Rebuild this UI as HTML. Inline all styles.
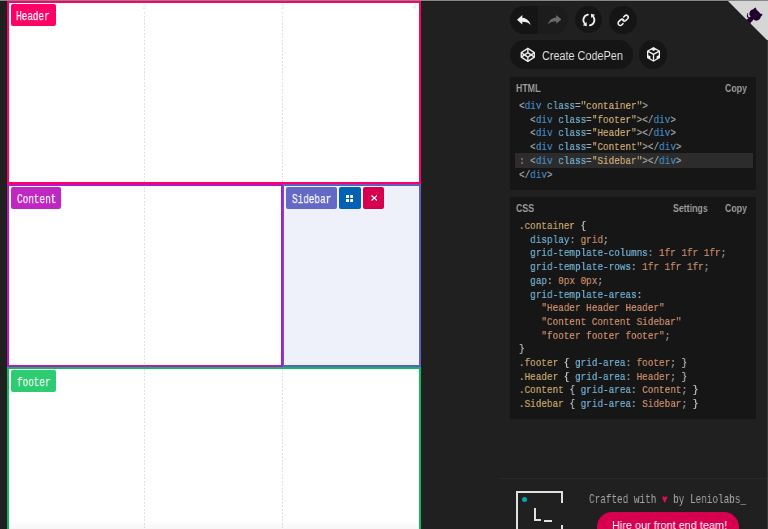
<!DOCTYPE html>
<html><head><meta charset="utf-8">
<style>
*{box-sizing:border-box;margin:0;padding:0}
html,body{width:768px;height:529px;overflow:hidden;background:#202020;font-family:"Liberation Sans",sans-serif;position:relative}
.abs{position:absolute}
#topline{left:0;top:0;width:768px;height:1px;background:rgba(165,165,165,0.775);z-index:50}
#topline2{left:0;top:1px;width:7px;height:1px;background:#1b1b1b;z-index:49}#topline3{left:421px;top:1px;width:307px;height:1px;background:#1b1b1b;z-index:49}
#rightline{left:767px;top:40px;width:1px;height:489px;background:#383838;z-index:40}
.area{position:absolute;border:2px solid}
.lbl{position:absolute;top:1px;height:22px;border-radius:2px}.lbl span{position:absolute;top:5.8px;color:#f4f4f4;font-family:"Liberation Mono",monospace;font-size:12px;line-height:14px;white-space:nowrap;transform:scaleX(0.78);transform-origin:0 0;-webkit-text-stroke:0.25px #fff;will-change:transform}
.gl{position:absolute;width:1px;background:repeating-linear-gradient(to bottom,#e2e2e2 0,#e2e2e2 2px,transparent 2px,transparent 3.5px)}.num{position:absolute;font-size:7px;color:#e6e6e6;line-height:8px}
.mono{font-family:"Liberation Mono",monospace}
.btn{position:absolute;background:#141414;border-radius:14px}
.panel{position:absolute;left:510px;width:246px;background:#161616}
.ph{position:absolute;top:0;font-weight:bold;font-size:10px;color:#9e9e9e;transform:scaleX(0.88);transform-origin:0 0;white-space:nowrap;will-change:transform}
.code{position:absolute;left:9px;font-family:"Liberation Mono",monospace;font-size:11.5px;line-height:13.7px;color:#9a9a9a;white-space:pre;transform:scaleX(0.8116);transform-origin:0 0;-webkit-text-stroke:0.2px;will-change:transform}
.t{color:#4490d0}.a{color:#74b3d6}.s{color:#d4b07a}.p{color:#a8a8a8}
.k{color:#76b5d9}.w{color:#cacaca}.v{color:#d4926f}.c{color:#cfac70}
</style></head><body>
<div id="topline" class="abs"></div>
<div id="topline2" class="abs"></div><div id="topline3" class="abs"></div>
<div id="rightline" class="abs"></div>

<!-- grid -->
<div class="abs" style="left:7px;top:1px;width:414px;height:540px;background:#fff"></div>
<div class="gl" style="left:144px;top:12px;height:530px"></div>
<div class="gl" style="left:282px;top:12px;height:530px"></div>
<div class="num" style="left:142.5px;top:3px">2</div><div class="num" style="left:280.5px;top:3px">3</div><div class="num" style="left:412.5px;top:3px">4</div>

<div class="area" style="left:7px;top:1px;width:414px;height:183px;border-color:#ff0066">
  <div class="lbl" style="left:2px;width:45px;background:#ff0066"><span style="left:5.2px">Header</span></div>
</div>
<div class="area" style="left:7px;top:184px;width:276px;height:183px;border-color:#b818bc">
  <div class="lbl" style="left:2px;width:50.2px;background:#c026c2"><span style="left:5.7px">Content</span></div>
</div>
<div class="area" style="left:283px;top:184px;width:138px;height:183px;border-color:#5c60c0;background:#eef1fa;border-width:2px 2px 2px 1px">
  <div class="lbl" style="left:2.4px;width:50.6px;background:#6569c6"><span style="left:5.9px">Sidebar</span></div>
  <div class="abs" style="left:55px;top:1px;width:21.7px;height:22px;border-radius:2px;background:#0061b5"></div>
  <div class="abs" style="left:78.7px;top:1px;width:21.7px;height:22px;border-radius:2px;background:#d6004f"></div>
  <svg class="abs" style="left:62.2px;top:8.6px" width="7.2" height="7" viewBox="0 0 7.2 7"><rect x="0" y="0" width="3" height="2.9" fill="#fff"/><rect x="4.2" y="0" width="3" height="2.9" fill="#fff"/><rect x="0" y="4.1" width="3" height="2.9" fill="#fff"/><rect x="4.2" y="4.1" width="3" height="2.9" fill="#fff"/></svg>
  <svg class="abs" style="left:86.5px;top:9px" width="6.5" height="6" viewBox="0 0 6.5 6"><path d="M0.5 0.5 L6 5.5 M6 0.5 L0.5 5.5" stroke="#fff" stroke-width="1.15"/></svg>
</div>
<div class="area" style="left:7px;top:367px;width:414px;height:183px;border-color:#10b860">
  <div class="lbl" style="left:2px;width:45.1px;background:#2ccd70"><span style="left:5.7px">footer</span></div>
</div>

<div class="abs" style="left:9px;top:521px;width:410px;height:8px;background:linear-gradient(to bottom,rgba(0,0,0,0),rgba(0,0,0,0.035))"></div>
<!-- right panel buttons -->
<div class="abs" style="left:510px;top:6px;width:58px;height:28px;border-radius:14px;overflow:hidden;background:#1c1c1c">
  <div class="abs" style="left:0;top:0;width:28.3px;height:28px;background:#151515"></div>
</div>
<svg class="abs" style="left:517.3px;top:14.9px" width="13.7" height="10.1" viewBox="3 5 18 15" preserveAspectRatio="none"><path d="M10 9V5l-7 7 7 7v-4.1c5 0 8.5 1.6 11 5.1-1-5-4-10-11-11z" fill="#f0f0f0"/></svg>
<svg class="abs" style="left:547.5px;top:15.3px" width="13.4" height="9.3" viewBox="3 5 18 15" preserveAspectRatio="none"><path d="M14 9V5l7 7-7 7v-4.1c-5 0-8.5 1.6-11 5.1 1-5 4-10 11-11z" fill="#6b6b6b"/></svg>
<div class="abs" style="left:575.1px;top:6.1px;width:27.4px;height:27.4px;border-radius:50%;background:#151515"></div>
<svg class="abs" style="left:575px;top:6px" width="28" height="28" viewBox="0 0 28 28">
  <g fill="none" stroke="#eeeeee" stroke-width="1.8" stroke-linecap="round">
    <path d="M12.94 8.58 A5.5 5.5 0 0 0 9.69 17.54"/>
    <path d="M14.86 19.42 A5.5 5.5 0 0 0 18.11 10.46"/>
  </g>
  <path d="M7.77 19.14 L11.87 20.14 L11.60 15.93 Z" fill="#eeeeee"/>
  <path d="M20.03 8.86 L15.93 7.86 L16.20 12.07 Z" fill="#eeeeee"/>
</svg>
<div class="abs" style="left:609.1px;top:6.1px;width:27.5px;height:27.5px;border-radius:50%;background:#151515"></div>
<svg class="abs" style="left:609px;top:6px" width="28" height="28" viewBox="0 0 28 28">
  <g fill="none" stroke="#eeeeee" stroke-width="1.55" stroke-linecap="round">
    <path d="M-3.33 0 A2 2 0 0 0 -1.33 2 L1.33 2 A2 2 0 0 0 1.33 -2 L-0.3 -2" transform="translate(16.3 12.2) rotate(-45)"/>
    <path d="M3.45 0 A2.2 2.2 0 0 0 1.25 -2.2 L-1.25 -2.2 A2.2 2.2 0 0 0 -1.25 2.2 L0.3 2.2" transform="translate(12.2 16.3) rotate(-45)"/>
  </g>
</svg>
<div class="abs" style="left:510px;top:40px;width:122.7px;height:28.5px;border-radius:14.25px;background:#151515"></div>
<svg class="abs" style="left:519.7px;top:46.7px" width="15.7" height="15.7" viewBox="0 0 24 24" fill="none" stroke="#e8e8e8" stroke-width="2.2" stroke-linejoin="round"><polygon points="12 2 22 8.5 22 15.5 12 22 2 15.5 2 8.5 12 2"/><line x1="12" y1="22" x2="12" y2="15.5"/><polyline points="22 8.5 12 15.5 2 8.5"/><polyline points="2 15.5 12 8.5 22 15.5"/><line x1="12" y1="2" x2="12" y2="8.5"/></svg>
<div class="abs" style="left:542.4px;top:49.2px;font-size:12px;color:#e2e2e2;transform:scaleX(0.905);transform-origin:0 0;white-space:nowrap;will-change:transform">Create CodePen</div>
<div class="abs" style="left:639.2px;top:40.3px;width:28.3px;height:28.3px;border-radius:50%;background:#151515"></div>
<svg class="abs" style="left:647px;top:47.2px" width="13.1" height="14.8" viewBox="2 0 21 24" preserveAspectRatio="none"><path fill="#f0f0f0" d="M2 6l10.455-6L22.91 6 23 17.95 12.455 24 2 18V6zm2.088 2.481v4.757l3.345 1.86v3.516l3.972 2.296v-8.272L4.088 8.481zm16.739 0l-7.317 4.157v8.272l3.972-2.296V15.1l3.345-1.861V8.48zM5.134 6.601l7.303 4.144 7.32-4.18-3.871-2.197-3.41 1.945-3.43-1.968L5.133 6.6z"/></svg>

<!-- github corner -->
<svg class="abs" style="left:728px;top:0.5px" width="40" height="40" viewBox="0 0 250 250"><path d="M0,0 L115,115 L130,115 L142,142 L250,250 L250,0 Z" fill="#d6d6d6"/><path d="M128.3,109.0 C113.8,99.7 119.0,89.6 119.0,89.6 C122.0,82.7 120.5,78.6 120.5,78.6 C119.2,72.0 123.4,76.3 123.4,76.3 C127.3,80.9 125.5,87.3 125.5,87.3 C122.9,97.6 130.6,101.9 134.4,103.2" fill="#22002e"/><path d="M115.0,115.0 C114.9,115.1 118.7,116.5 119.8,115.4 L133.7,101.6 C136.9,99.2 139.9,98.4 142.2,98.6 C133.8,88.0 127.5,74.4 143.8,58.0 C148.5,53.4 154.0,51.2 159.7,51.0 C160.3,49.4 163.2,43.6 171.4,40.1 C171.4,40.1 176.1,42.5 178.8,56.2 C183.1,58.6 187.2,61.8 190.9,65.4 C194.5,69.0 197.7,73.2 200.1,77.6 C213.8,80.2 216.3,84.9 216.3,84.9 C212.7,93.1 206.9,96.0 205.4,96.6 C205.1,102.4 203.0,107.8 198.3,112.5 C181.9,128.9 168.3,122.5 157.7,114.1 C157.9,116.9 156.7,120.9 152.7,124.9 L141.0,136.5 C139.8,137.7 141.6,141.9 141.8,141.8 Z" fill="#22002e"/></svg>

<!-- HTML panel -->
<div class="panel" style="top:77px;height:113px">
  <div class="ph" style="left:5.6px;top:6px">HTML</div>
  <div class="ph" style="left:215.4px;top:6px">Copy</div>
  <div class="abs" style="left:5px;top:76px;width:238px;height:14.8px;background:#2c2c2c"></div>
  <div class="abs" style="left:10.9px;top:80.9px;width:2.2px;height:2.3px;border-radius:1px;background:#a86a50"></div><div class="abs" style="left:10.9px;top:84.8px;width:2.2px;height:2.3px;border-radius:1px;background:#a86a50"></div><div class="abs" style="left:11.5px;top:83px;width:1px;height:2px;background:#503a32"></div>
<div class="code" style="top:21.9px"><span class="p">&lt;</span><span class="t">div</span> <span class="a">class</span><span class="p">=</span><span class="s">"container"</span><span class="p">&gt;</span>
  <span class="p">&lt;</span><span class="t">div</span> <span class="a">class</span><span class="p">=</span><span class="s">"footer"</span><span class="p">&gt;&lt;/</span><span class="t">div</span><span class="p">&gt;</span>
  <span class="p">&lt;</span><span class="t">div</span> <span class="a">class</span><span class="p">=</span><span class="s">"Header"</span><span class="p">&gt;&lt;/</span><span class="t">div</span><span class="p">&gt;</span>
  <span class="p">&lt;</span><span class="t">div</span> <span class="a">class</span><span class="p">=</span><span class="s">"Content"</span><span class="p">&gt;&lt;/</span><span class="t">div</span><span class="p">&gt;</span>
  <span class="p">&lt;</span><span class="t">div</span> <span class="a">class</span><span class="p">=</span><span class="s">"Sidebar"</span><span class="p">&gt;&lt;/</span><span class="t">div</span><span class="p">&gt;</span>
<span class="p">&lt;/</span><span class="t">div</span><span class="p">&gt;</span></div>
</div>
<!-- CSS panel -->
<div class="panel" style="top:197px;height:222px">
  <div class="ph" style="left:5.6px;top:6px">CSS</div>
  <div class="ph" style="left:163px;top:6px">Settings</div>
  <div class="ph" style="left:215.4px;top:6px">Copy</div>
<div class="code" style="top:22.3px"><span class="c">.container</span> <span class="w">{</span>
  <span class="k">display</span><span class="p">:</span> <span class="v">grid</span><span class="p">;</span>
  <span class="k">grid-template-columns</span><span class="p">:</span> <span class="v">1fr 1fr 1fr</span><span class="p">;</span>
  <span class="k">grid-template-rows</span><span class="p">:</span> <span class="v">1fr 1fr 1fr</span><span class="p">;</span>
  <span class="k">gap</span><span class="p">:</span> <span class="v">0px 0px</span><span class="p">;</span>
  <span class="k">grid-template-areas</span><span class="p">:</span>
    <span class="v">"Header Header Header"</span>
    <span class="v">"Content Content Sidebar"</span>
    <span class="v">"footer footer footer"</span><span class="p">;</span>
<span class="w">}</span>
<span class="c">.footer</span> <span class="w">{</span> <span class="k">grid-area</span><span class="p">:</span> <span class="v">footer</span><span class="p">;</span> <span class="w">}</span>
<span class="c">.Header</span> <span class="w">{</span> <span class="k">grid-area</span><span class="p">:</span> <span class="v">Header</span><span class="p">;</span> <span class="w">}</span>
<span class="c">.Content</span> <span class="w">{</span> <span class="k">grid-area</span><span class="p">:</span> <span class="v">Content</span><span class="p">;</span> <span class="w">}</span>
<span class="c">.Sidebar</span> <span class="w">{</span> <span class="k">grid-area</span><span class="p">:</span> <span class="v">Sidebar</span><span class="p">;</span> <span class="w">}</span></div>
</div>

<!-- site footer -->
<div class="abs" style="left:498px;top:478px;width:270px;height:1px;background:#282828"></div>
<div class="abs" style="left:516.2px;top:491.2px;width:2.3px;height:40px;background:#e0e0e0"></div>
<div class="abs" style="left:516.2px;top:491.2px;width:46.8px;height:2.3px;background:#e0e0e0"></div>
<div class="abs" style="left:560.7px;top:491.2px;width:2.3px;height:11.6px;background:#e0e0e0"></div>
<div class="abs" style="left:560.7px;top:525.4px;width:2.3px;height:10px;background:#e0e0e0"></div>
<div class="abs" style="left:522px;top:497px;width:5.4px;height:5.4px;border-radius:50%;background:#00a8b4"></div>
<div class="abs" style="left:533.7px;top:508.3px;width:2.2px;height:12.6px;background:#e0e0e0"></div>
<div class="abs" style="left:533.7px;top:518.7px;width:7px;height:2.2px;background:#e0e0e0"></div>
<div class="abs" style="left:544px;top:519.8px;width:8px;height:2.2px;background:#e0e0e0"></div>
<div class="abs mono" style="left:589.3px;top:493.1px;font-size:12.2px;color:#a6a6a6;white-space:pre;transform:scaleX(0.767);transform-origin:0 0;will-change:transform">Crafted with <span style="color:#e0105a">&#9829;</span> by Leniolabs_</div>
<div class="abs" style="left:596.6px;top:511.8px;width:142px;height:30px;border-radius:15px;background:#d6004f"></div>
<div class="abs" style="left:611.5px;top:517.6px;font-size:11.6px;color:#fff;white-space:nowrap;transform:scaleX(0.94);transform-origin:0 0;will-change:transform">Hire our front end team!</div>
</body></html>
